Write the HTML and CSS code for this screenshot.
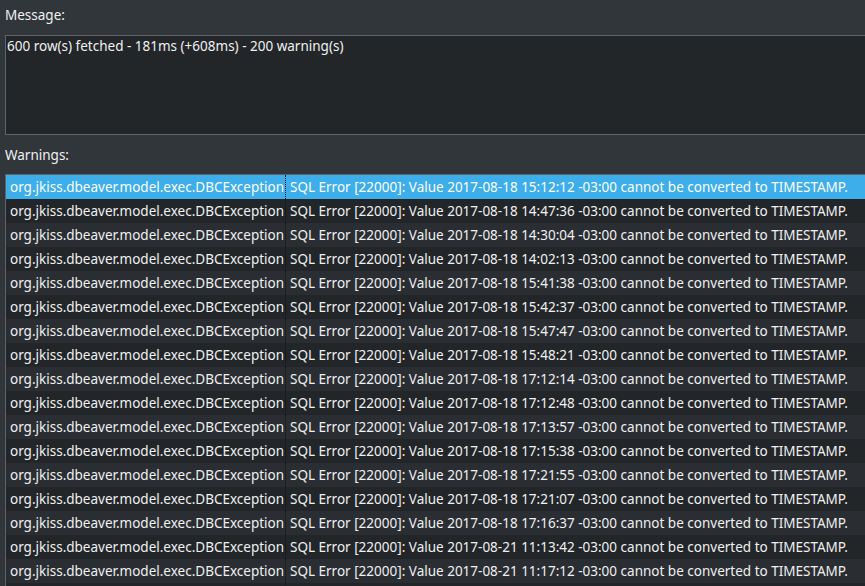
FILE: index.html
```html
<!DOCTYPE html>
<html>
<head>
<meta charset="utf-8">
<link rel="stylesheet" href="styles.css">
</head>
<body>
<div class="page">
  <div class="label label-message">Message:</div>
  <div class="msgbox">600 row(s) fetched - 181ms (+608ms) - 200 warning(s)</div>
  <div class="label label-warnings">Warnings:</div>
  <div class="table">
    <div class="row selected"><div class="c1">org.jkiss.dbeaver.model.exec.DBCException</div><div class="c2">SQL Error [22000]: Value 2017-08-18 15:12:12 -03:00 cannot be converted to TIMESTAMP.</div></div>
    <div class="row"><div class="c1">org.jkiss.dbeaver.model.exec.DBCException</div><div class="c2">SQL Error [22000]: Value 2017-08-18 14:47:36 -03:00 cannot be converted to TIMESTAMP.</div></div>
    <div class="row"><div class="c1">org.jkiss.dbeaver.model.exec.DBCException</div><div class="c2">SQL Error [22000]: Value 2017-08-18 14:30:04 -03:00 cannot be converted to TIMESTAMP.</div></div>
    <div class="row"><div class="c1">org.jkiss.dbeaver.model.exec.DBCException</div><div class="c2">SQL Error [22000]: Value 2017-08-18 14:02:13 -03:00 cannot be converted to TIMESTAMP.</div></div>
    <div class="row"><div class="c1">org.jkiss.dbeaver.model.exec.DBCException</div><div class="c2">SQL Error [22000]: Value 2017-08-18 15:41:38 -03:00 cannot be converted to TIMESTAMP.</div></div>
    <div class="row"><div class="c1">org.jkiss.dbeaver.model.exec.DBCException</div><div class="c2">SQL Error [22000]: Value 2017-08-18 15:42:37 -03:00 cannot be converted to TIMESTAMP.</div></div>
    <div class="row"><div class="c1">org.jkiss.dbeaver.model.exec.DBCException</div><div class="c2">SQL Error [22000]: Value 2017-08-18 15:47:47 -03:00 cannot be converted to TIMESTAMP.</div></div>
    <div class="row"><div class="c1">org.jkiss.dbeaver.model.exec.DBCException</div><div class="c2">SQL Error [22000]: Value 2017-08-18 15:48:21 -03:00 cannot be converted to TIMESTAMP.</div></div>
    <div class="row"><div class="c1">org.jkiss.dbeaver.model.exec.DBCException</div><div class="c2">SQL Error [22000]: Value 2017-08-18 17:12:14 -03:00 cannot be converted to TIMESTAMP.</div></div>
    <div class="row"><div class="c1">org.jkiss.dbeaver.model.exec.DBCException</div><div class="c2">SQL Error [22000]: Value 2017-08-18 17:12:48 -03:00 cannot be converted to TIMESTAMP.</div></div>
    <div class="row"><div class="c1">org.jkiss.dbeaver.model.exec.DBCException</div><div class="c2">SQL Error [22000]: Value 2017-08-18 17:13:57 -03:00 cannot be converted to TIMESTAMP.</div></div>
    <div class="row"><div class="c1">org.jkiss.dbeaver.model.exec.DBCException</div><div class="c2">SQL Error [22000]: Value 2017-08-18 17:15:38 -03:00 cannot be converted to TIMESTAMP.</div></div>
    <div class="row"><div class="c1">org.jkiss.dbeaver.model.exec.DBCException</div><div class="c2">SQL Error [22000]: Value 2017-08-18 17:21:55 -03:00 cannot be converted to TIMESTAMP.</div></div>
    <div class="row"><div class="c1">org.jkiss.dbeaver.model.exec.DBCException</div><div class="c2">SQL Error [22000]: Value 2017-08-18 17:21:07 -03:00 cannot be converted to TIMESTAMP.</div></div>
    <div class="row"><div class="c1">org.jkiss.dbeaver.model.exec.DBCException</div><div class="c2">SQL Error [22000]: Value 2017-08-18 17:16:37 -03:00 cannot be converted to TIMESTAMP.</div></div>
    <div class="row"><div class="c1">org.jkiss.dbeaver.model.exec.DBCException</div><div class="c2">SQL Error [22000]: Value 2017-08-21 11:13:42 -03:00 cannot be converted to TIMESTAMP.</div></div>
    <div class="row"><div class="c1">org.jkiss.dbeaver.model.exec.DBCException</div><div class="c2">SQL Error [22000]: Value 2017-08-21 11:17:12 -03:00 cannot be converted to TIMESTAMP.</div></div>
    <div class="row filler"><div class="c1"></div><div class="c2"></div></div>
  </div>
</div>
</body>
</html>
```

FILE: styles.css
```css
html, body {
  margin: 0;
  padding: 0;
  background: #31363b;
  overflow: hidden;
  height: 586px;
}
.page {
  font-family: "Noto Sans", "DejaVu Sans", sans-serif;
  font-size: 13.5px;
  color: #eff0f1;
  width: 865px;
  overflow: hidden;
}
.label {
  padding-left: 5px;
  height: 20px;
  line-height: 20px;
}
.label-message {
  padding-top: 5px;
  height: 35px;
  line-height: 20px;
  box-sizing: border-box;
}
.msgbox {
  margin-left: 5px;
  width: 880px;
  height: 100px;
  box-sizing: border-box;
  background: #232629;
  border: 1px solid #5f6368;
  padding: 0 0 0 1px;
  line-height: 20px;
}
.label-warnings {
  margin-top: 10px;
  height: 29px;
  line-height: 20px;
  box-sizing: border-box;
}
.table {
  margin-left: 5px;
  width: 880px;
  border-top: 1px solid #5f6368;
  border-left: 1px solid #5f6368;
  background: #232629;
}
.row {
  display: grid;
  grid-template-columns: 280px 1fr;
  height: 24px;
  line-height: 24px;
  background: #232629;
}
.row:nth-child(odd) {
  background: #2a2e32;
}
.row.selected {
  background: #3daee9;
  color: #fcfcfc;
}
.c1 {
  padding-left: 4px;
  border-right: 1px dotted #111315;
  white-space: nowrap;
  overflow: hidden;
}
.c2 {
  padding-left: 4px;
  white-space: nowrap;
  overflow: hidden;
}
```
